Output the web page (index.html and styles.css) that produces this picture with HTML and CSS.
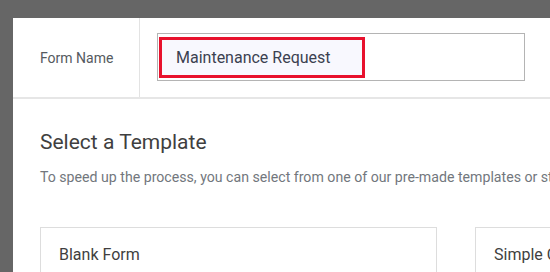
FILE: index.html
```html
<!DOCTYPE html>
<html>
<head>
<meta charset="utf-8">
<link rel="stylesheet" href="styles.css">
</head>
<body>
<div class="panel">
  <div class="header">
    <div class="label-col">Form Name</div>
    <div class="field-col">
      <div class="input">
        <span class="highlight">Maintenance Request</span>
      </div>
    </div>
  </div>
  <div class="body">
    <h2 class="title">Select a Template</h2>
    <p class="desc">To speed up the process, you can select from one of our pre-made templates or start with a blank form.</p>
    <div class="cards">
      <div class="card">Blank Form</div>
      <div class="card">Simple Contact Form</div>
    </div>
  </div>
</div>
</body>
</html>
```
FILE: styles.css
```css
html, body {
  margin: 0;
  padding: 0;
}
body {
  background: #666666;
  font-family: Roboto, "Liberation Sans", sans-serif;
  overflow: hidden;
  width: 550px;
  height: 272px;
}
.panel {
  margin: 18px 0 0 13px;
  width: 700px;
  height: 400px;
  background: #ffffff;
}
.header {
  display: flex;
  height: 79px;
  border-bottom: 2px solid #e6e6e6;
}
.label-col {
  width: 127px;
  border-right: 1px solid #e3e3e3;
  box-sizing: border-box;
  padding-left: 27px;
  display: flex;
  align-items: center;
  font-size: 14px;
  color: #555a60;
}
.field-col {
  padding: 15px 0 0 17px;
}
.input {
  width: 368px;
  height: 48px;
  box-sizing: border-box;
  border: 1px solid #b4b4b4;
  display: flex;
  align-items: center;
  padding-left: 1px;
}
.highlight {
  height: 41px;
  box-sizing: border-box;
  border: 3px solid #e8112d;
  background: #f8f8fe;
  display: flex;
  align-items: center;
  padding: 0 16px 0 14px;
  font-size: 16px;
  color: #3b4150;
  width: 206px;
}
.body {
  padding: 0 0 0 27px;
}
.title {
  margin: 0;
  padding-top: 30px;
  font-weight: 400;
  font-size: 21px;
  line-height: 26px;
  color: #3f3f3f;
}
.desc {
  margin: 12px 0 0 0;
  font-size: 14.15px;
  line-height: 20px;
  color: #72777d;
  white-space: nowrap;
}
.cards {
  display: flex;
  gap: 38px;
  margin-top: 40px;
}
.card {
  width: 397px;
  height: 80px;
  box-sizing: border-box;
  border: 1px solid #dddddd;
  padding: 17px 0 0 18px;
  font-size: 16px;
  color: #3f3f3f;
  flex-shrink: 0;
}
```
